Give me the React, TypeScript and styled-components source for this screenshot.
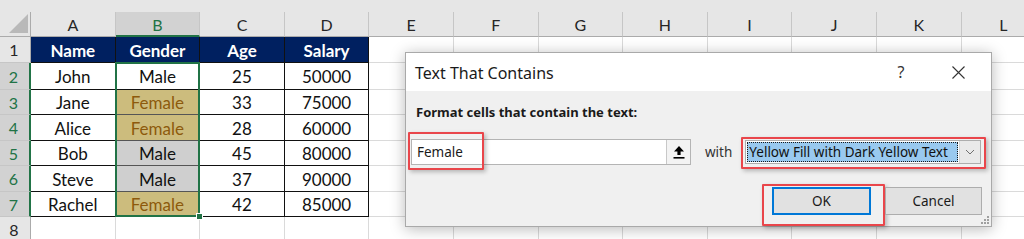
import React from 'react';
import styled, { createGlobalStyle, css } from 'styled-components';

const GlobalStyle = createGlobalStyle`
  html, body {
    margin: 0;
    padding: 0;
    background: #ffffff;
    overflow: hidden;
  }
  * {
    box-sizing: border-box;
  }
`;

const COLUMNS = ['A', 'B', 'C', 'D', 'E', 'F', 'G', 'H', 'I', 'J', 'K', 'L'];
const ROW_HEIGHTS = [26, 27, 25, 26, 25, 26, 25, 26];
const COL_WIDTH = 84.6;
const HEADER_WIDTH = 31;
const HEADER_HEIGHT = 25;

const TABLE = [
  ['Name', 'Gender', 'Age', 'Salary'],
  ['John', 'Male', '25', '50000'],
  ['Jane', 'Female', '33', '75000'],
  ['Alice', 'Female', '28', '60000'],
  ['Bob', 'Male', '45', '80000'],
  ['Steve', 'Male', '37', '90000'],
  ['Rachel', 'Female', '42', '85000'],
];

type CellKind = 'blank' | 'head' | 'data' | 'female' | 'marked';

const GREEN = '#217346';

const Page = styled.div`
  position: relative;
  width: 1024px;
  height: 239px;
  overflow: hidden;
  font-family: Lato, 'Liberation Sans', sans-serif;
`;

const TopStrip = styled.div`
  height: 12px;
  background: #e6e6e6;
`;

const Sheet = styled.div`
  position: relative;
  display: grid;
  grid-template-columns: ${HEADER_WIDTH}px repeat(12, ${COL_WIDTH}px);
  grid-template-rows: ${HEADER_HEIGHT}px ${ROW_HEIGHTS.map((h) => `${h}px`).join(' ')};
`;

const Corner = styled.div`
  background: #e6e6e6;
  border-right: 1px solid #ababab;
  border-bottom: 1px solid #ababab;
  display: flex;
  align-items: flex-end;
  justify-content: flex-end;
  padding: 0 2px 3px 0;
`;

const CornerTriangle = styled.div`
  width: 0;
  height: 0;
  border-left: 19px solid transparent;
  border-bottom: 19px solid #b9b9b9;
`;

const ColHeader = styled.div<{ $selected: boolean }>`
  display: flex;
  align-items: center;
  justify-content: center;
  font-size: 16px;
  padding-top: 1px;
  background: ${(p) => (p.$selected ? '#d2d2d2' : '#e6e6e6')};
  color: ${(p) => (p.$selected ? GREEN : '#262626')};
  border-right: 1px solid #c6c6c6;
  border-bottom: ${(p) => (p.$selected ? `2px solid ${GREEN}` : '1px solid #ababab')};
`;

const RowHeader = styled.div<{ $selected: boolean }>`
  display: flex;
  align-items: center;
  justify-content: center;
  font-size: 16px;
  padding-right: 2px;
  background: ${(p) => (p.$selected ? '#d2d2d2' : '#e6e6e6')};
  color: ${(p) => (p.$selected ? GREEN : '#262626')};
  border-bottom: 1px solid #c6c6c6;
  border-right: ${(p) => (p.$selected ? `2px solid ${GREEN}` : '1px solid #ababab')};
`;

const kindStyles: Record<CellKind, ReturnType<typeof css>> = {
  blank: css`
    background: #ffffff;
    border-right: 1px solid #dadada;
    border-bottom: 1px solid #dadada;
  `,
  head: css`
    background: #002060;
    color: #ffffff;
    font-weight: 700;
    border-right: 1px solid #111;
    border-bottom: 1px solid #111;
  `,
  data: css`
    background: #ffffff;
    color: #111;
    border-right: 1px solid #111;
    border-bottom: 1px solid #111;
  `,
  female: css`
    background: #ccbc7d;
    color: #8d5a0c;
    border-right: 1px solid #111;
    border-bottom: 1px solid #555;
  `,
  marked: css`
    background: #cfcfcf;
    color: #111;
    border-right: 1px solid #111;
    border-bottom: 1px solid #555;
  `,
};

const Cell = styled.div<{ $kind: CellKind }>`
  display: flex;
  align-items: center;
  justify-content: center;
  font-size: 17px;
  padding-top: 1px;
  white-space: nowrap;
  ${(p) => kindStyles[p.$kind]}
`;

/* green range outline over B2:B7 */
const Selection = styled.div`
  position: absolute;
  left: ${HEADER_WIDTH + COL_WIDTH - 1}px;
  top: ${HEADER_HEIGHT + ROW_HEIGHTS[0] - 1}px;
  width: ${COL_WIDTH + 1}px;
  height: ${ROW_HEIGHTS.slice(1, 7).reduce((a, b) => a + b, 0) + 1}px;
  border: 2px solid ${GREEN};
  pointer-events: none;
  z-index: 1;
`;

const FillHandle = styled.div`
  position: absolute;
  right: -5px;
  bottom: -5px;
  width: 7px;
  height: 7px;
  background: ${GREEN};
  border: 1px solid #ffffff;
`;

/* ---------- dialog ---------- */

const Dialog = styled.div`
  position: absolute;
  left: 405px;
  top: 52px;
  width: 587px;
  height: 175px;
  display: flex;
  flex-direction: column;
  background: #f0f0f0;
  border: 1px solid #a9a9a9;
  box-shadow: 0 2px 14px rgba(0, 0, 0, 0.28);
  font-family: 'Noto Sans', 'Open Sans', sans-serif;
  color: #1a1a1a;
  z-index: 5;
`;

const TitleBar = styled.div`
  height: 38px;
  flex: none;
  display: flex;
  align-items: center;
  justify-content: space-between;
  background: #ffffff;
  padding: 0 0 0 9px;
`;

const Title = styled.div`
  font-size: 16px;
  padding-top: 1px;
`;

const TitleButtons = styled.div`
  display: flex;
  align-items: center;
  height: 100%;
`;

const HelpGlyph = styled.div`
  width: 60px;
  text-align: center;
  font-size: 16px;
  color: #333;
  padding-right: 8px;
`;

const CloseButton = styled.div`
  width: 46px;
  height: 100%;
  display: flex;
  align-items: center;
  justify-content: center;
  margin-right: 10px;
`;

const Body = styled.div`
  position: relative;
  flex: 1;
  display: flex;
  flex-direction: column;
  padding: 12px 9px 0 5px;
`;

const Prompt = styled.div`
  font-size: 13px;
  font-weight: 700;
  line-height: 18px;
  padding-left: 5px;
`;

const InputRow = styled.div`
  display: flex;
  align-items: center;
  margin-top: 18px;
  height: 26px;
`;

const TextField = styled.div`
  position: relative;
  width: 280px;
  height: 26px;
  display: flex;
  align-items: stretch;
  background: #ffffff;
  border: 1px solid #b4b4b4;
`;

const FieldValue = styled.div`
  flex: 1;
  display: flex;
  align-items: center;
  padding-left: 5px;
  font-size: 13.5px;
`;

const RefButton = styled.div`
  width: 24px;
  display: flex;
  align-items: center;
  justify-content: center;
  background: #f3f3f3;
  border-left: 1px solid #c8c8c8;
`;

const WithLabel = styled.div`
  font-size: 13.5px;
  margin: 0 13px 0 14px;
  color: #333;
`;

const Combo = styled.div`
  position: relative;
  width: 236px;
  height: 24px;
  display: flex;
  align-items: stretch;
  background: #ffffff;
  border: 1px solid #adadad;
`;

const ComboValue = styled.div`
  flex: 1;
  display: flex;
  align-items: stretch;
  padding: 1px;
`;

const SelectedText = styled.div`
  flex: 1;
  display: flex;
  align-items: center;
  padding-left: 2px;
  background: #99c9ef;
  outline: 1px dotted #1a1a1a;
  outline-offset: -1px;
  font-size: 13.5px;
  white-space: nowrap;
  color: #111;
`;

const ComboArrow = styled.div`
  width: 21px;
  display: flex;
  align-items: center;
  justify-content: center;
  background: #e9e9e9;
  border-left: 1px solid #d6d6d6;
`;

const ButtonRow = styled.div`
  display: flex;
  justify-content: flex-end;
  gap: 14px;
  margin-top: 22px;
`;

const DialogButton = styled.div<{ $primary?: boolean }>`
  position: relative;
  width: ${(p) => (p.$primary ? '99px' : '97px')};
  height: 28px;
  display: flex;
  align-items: center;
  justify-content: center;
  font-size: 13.5px;
  background: #e1e1e1;
  border: ${(p) => (p.$primary ? '2px solid #0078d7' : '1px solid #adadad')};
`;

const Callout = styled.div`
  position: absolute;
  border: 2.5px solid #e9464b;
  border-radius: 1px;
  box-shadow: 2px 2px 4px rgba(0, 0, 0, 0.25);
  pointer-events: none;
`;

const FieldCallout = styled(Callout)`
  left: -4px;
  top: -8px;
  width: 76px;
  height: 38px;
`;

const ComboCallout = styled(Callout)`
  left: -5px;
  top: -4px;
  width: 245px;
  height: 32px;
`;

const OkCallout = styled(Callout)`
  left: -12px;
  top: -5px;
  width: 123px;
  height: 42px;
`;

const Grip = styled.div`
  position: absolute;
  right: 2px;
  bottom: 2px;
  display: flex;
`;

const kindFor = (r: number, c: number): CellKind => {
  if (r >= TABLE.length || c >= 4) return 'blank';
  if (r === 0) return 'head';
  if (c === 1 && TABLE[r][c] === 'Female') return 'female';
  if (c === 1 && r > 1) return 'marked';
  return 'data';
};

export default function App() {
  return (
    <Page>
      <GlobalStyle />
      <TopStrip />
      <Sheet>
        <Corner>
          <CornerTriangle />
        </Corner>
        {COLUMNS.map((col) => (
          <ColHeader key={col} $selected={col === 'B'}>
            {col}
          </ColHeader>
        ))}
        {ROW_HEIGHTS.map((_, r) => (
          <React.Fragment key={r}>
            <RowHeader $selected={r >= 1 && r <= 6}>{r + 1}</RowHeader>
            {COLUMNS.map((col, c) => (
              <Cell key={col} $kind={kindFor(r, c)}>
                {TABLE[r] && c < 4 ? TABLE[r][c] : ''}
              </Cell>
            ))}
          </React.Fragment>
        ))}
        <Selection>
          <FillHandle />
        </Selection>
      </Sheet>

      <Dialog>
        <TitleBar>
          <Title>Text That Contains</Title>
          <TitleButtons>
            <HelpGlyph>?</HelpGlyph>
            <CloseButton>
              <svg width="13" height="13" viewBox="0 0 13 13">
                <path d="M0.5 0.5 L12.5 12.5 M12.5 0.5 L0.5 12.5" stroke="#333" strokeWidth="1.1" fill="none" />
              </svg>
            </CloseButton>
          </TitleButtons>
        </TitleBar>
        <Body>
          <Prompt>Format cells that contain the text:</Prompt>
          <InputRow>
            <TextField>
              <FieldValue>Female</FieldValue>
              <RefButton>
                <svg width="12" height="14" viewBox="0 0 12 14">
                  <path d="M6 1 L11 6.5 L7.6 6.5 L7.6 10 L4.4 10 L4.4 6.5 L1 6.5 Z" fill="#000" />
                  <rect x="0.5" y="12" width="11" height="1.6" fill="#000" />
                </svg>
              </RefButton>
              <FieldCallout />
            </TextField>
            <WithLabel>with</WithLabel>
            <Combo>
              <ComboValue>
                <SelectedText>Yellow Fill with Dark Yellow Text</SelectedText>
              </ComboValue>
              <ComboArrow>
                <svg width="10" height="6" viewBox="0 0 10 6">
                  <path d="M1 1 L5 5 L9 1" stroke="#707070" strokeWidth="1" fill="none" />
                </svg>
              </ComboArrow>
              <ComboCallout />
            </Combo>
          </InputRow>
          <ButtonRow>
            <DialogButton $primary>
              OK
              <OkCallout />
            </DialogButton>
            <DialogButton>Cancel</DialogButton>
          </ButtonRow>
          <Grip>
            <svg width="8" height="8" viewBox="0 0 8 8">
              <rect x="6" y="0" width="2" height="2" fill="#a0a0a0" />
              <rect x="3" y="3" width="2" height="2" fill="#a0a0a0" />
              <rect x="6" y="3" width="2" height="2" fill="#a0a0a0" />
              <rect x="0" y="6" width="2" height="2" fill="#a0a0a0" />
              <rect x="3" y="6" width="2" height="2" fill="#a0a0a0" />
              <rect x="6" y="6" width="2" height="2" fill="#a0a0a0" />
            </svg>
          </Grip>
        </Body>
      </Dialog>
    </Page>
  );
}
